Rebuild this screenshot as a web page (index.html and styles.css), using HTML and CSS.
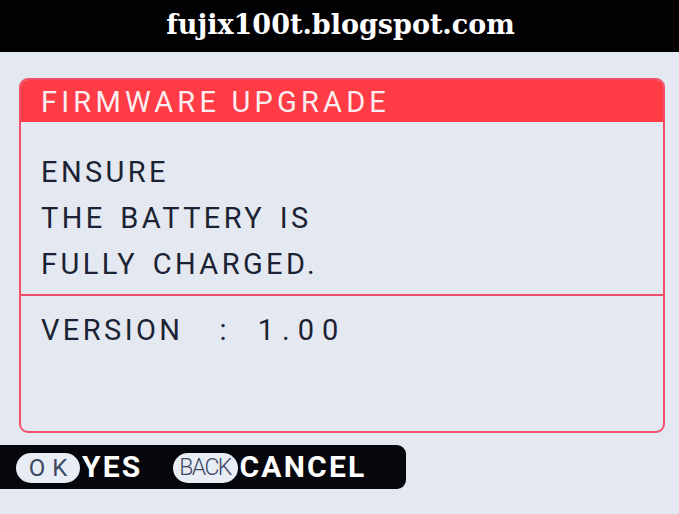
FILE: index.html
```html
<!DOCTYPE html>
<html>
<head>
<meta charset="utf-8">
<link rel="stylesheet" href="styles.css">
</head>
<body>
<div class="screen">
  <div class="topbar"><span class="site">fujix100t.blogspot.com</span></div>
  <div class="dialog">
    <div class="dlg-head">FIRMWARE UPGRADE</div>
    <div class="dlg-msg">
      <div class="line">ENSURE</div>
      <div class="line">THE BATTERY IS</div>
      <div class="line">FULLY CHARGED.</div>
    </div>
    <div class="dlg-ver">
      <div class="line"><span class="ver-label">VERSION</span><span class="ver-colon">:</span><span class="ver-num">1.00</span></div>
    </div>
  </div>
  <div class="guide">
    <span class="pill pill-ok">OK</span><span class="act">YES</span>
    <span class="pill pill-back">BACK</span><span class="act">CANCEL</span>
  </div>
</div>
</body>
</html>
```
FILE: styles.css
```css
html, body {
  margin: 0;
  padding: 0;
  background: #e4e8f1;
}
.screen {
  width: 679px;
  height: 514px;
  overflow: hidden;
  display: flex;
  flex-direction: column;
  font-family: Roboto, "Liberation Sans", sans-serif;
}
.topbar {
  height: 52px;
  background: #020204;
  display: flex;
  align-items: center;
  justify-content: center;
}
.site {
  font-family: "DejaVu Serif", "Liberation Serif", serif;
  font-weight: bold;
  font-size: 27px;
  color: #ffffff;
  margin-top: -4px;
  margin-left: 2px;
}
.dialog {
  margin: 26px 0 0 19px;
  width: 642px;
  height: 351px;
  border: 2px solid #f2506a;
  border-radius: 9px;
  overflow: hidden;
  display: flex;
  flex-direction: column;
}
.dlg-head {
  height: 42px;
  background: #ff3b45;
  color: #fbeef0;
  font-size: 29px;
  letter-spacing: 4.2px;
  line-height: 44px;
  padding-left: 20px;
  font-weight: 400;
}
.dlg-msg {
  height: 145px;
  padding: 27px 0 0 20px;
  border-bottom: 2px solid #f2506a;
  color: #1b2233;
}
.line {
  font-size: 29px;
  line-height: 46px;
  letter-spacing: 3.4px;
  word-spacing: 4px;
  white-space: nowrap;
}
.dlg-ver {
  padding: 11px 0 0 20px;
  color: #1b2233;
}
.ver-colon {
  margin-left: 36px;
}
.ver-num {
  margin-left: 28px;
  letter-spacing: 8px;
}
.guide {
  margin-top: 12px;
  width: 390px;
  height: 44px;
  background: #05070c;
  border-radius: 0 9px 9px 0;
  display: flex;
  align-items: center;
  padding-left: 16px;
}
.pill {
  height: 30px;
  border-radius: 15px;
  background: #e8ecf4;
  color: #3c4864;
  display: flex;
  align-items: center;
  justify-content: center;
  margin-top: 1px;
}
.pill-ok {
  width: 64px;
  font-size: 24px;
  letter-spacing: 7px;
  text-indent: 7px;
  font-weight: 400;
}
.pill-back {
  width: 65px;
  margin-left: 30px;
  font-size: 23px;
  letter-spacing: -1.6px;
  font-weight: 300;
}
.act {
  color: #ffffff;
  font-weight: bold;
  font-size: 30px;
  letter-spacing: 2.2px;
  margin-left: 2px;
  line-height: 44px;
}
```
